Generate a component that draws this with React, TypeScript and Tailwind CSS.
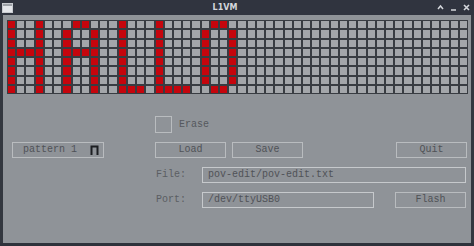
import React from 'react';

const ROWS = 8;
const COLS = 50;

// lit cells spelling HALLO, as "row,col"
function litCells(): Set<string> {
  const s = new Set<string>();
  const v = (c: number, r0: number, r1: number) => {
    for (let r = r0; r <= r1; r++) s.add(`${r},${c}`);
  };
  const h = (r: number, c0: number, c1: number) => {
    for (let c = c0; c <= c1; c++) s.add(`${r},${c}`);
  };
  // H
  v(0, 0, 7); v(3, 0, 7); h(3, 1, 2);
  // A
  v(6, 1, 7); v(9, 1, 7); h(0, 7, 8); h(3, 7, 8);
  // L
  v(12, 0, 7); h(7, 13, 14);
  // L
  v(16, 0, 7); h(7, 17, 19);
  // O
  v(21, 1, 6); v(24, 1, 6); h(0, 22, 23); h(7, 22, 23);
  return s;
}

const lit = litCells();

function LedGrid() {
  const cells = [];
  for (let r = 0; r < ROWS; r++) {
    for (let c = 0; c < COLS; c++) {
      const on = lit.has(`${r},${c}`);
      cells.push(
        <div key={`${r}-${c}`} className={on ? 'bg-[#c5050d]' : 'bg-[#a3a6aa]'} />
      );
    }
  }
  return (
    <div className="grid h-[74px] w-[461px] grid-cols-[repeat(50,1fr)] grid-rows-[repeat(8,1fr)] gap-[2px] bg-[#383c42] p-[1px]">
      {cells}
    </div>
  );
}

function Button({ label, className = '' }: { label: string; className?: string }) {
  return (
    <div
      className={`flex h-[16px] items-center justify-center border border-[#b9bcbf] text-[10px] leading-none text-[#4f5257] ${className}`}
    >
      {label}
    </div>
  );
}

function Entry({ value, className = '' }: { value: string; className?: string }) {
  return (
    <div
      className={`flex h-[16px] items-center border border-[#c6c9cc] pl-[5px] text-[10px] leading-none text-[#4f5257] ${className}`}
    >
      {value}
    </div>
  );
}

function TitleBar() {
  return (
    <div className="relative flex h-[15px] items-center bg-[#30343f] px-[2px]">
      <div className="flex h-[10px] w-[11px] flex-col border border-[#c8cbd0] bg-[#e4e6ea]">
        <div className="h-[2px] bg-[#9ea2a8]" />
      </div>
      <div className="flex-1 text-center text-[8px] font-bold leading-none text-[#d4d7dc] [font-family:'DejaVu_Sans',sans-serif]">
        L1VM
      </div>
      <div className="flex items-center gap-[6px] pr-[2px] text-[#d4d7dc]">
        <svg width="7" height="7" viewBox="0 0 7 7">
          <path d="M1 5 L3.5 2 L6 5" fill="none" stroke="currentColor" strokeWidth="1.5" />
        </svg>
        <svg width="7" height="7" viewBox="0 0 7 7">
          <path d="M1 6 H6" fill="none" stroke="currentColor" strokeWidth="1.5" />
        </svg>
        <svg width="7" height="7" viewBox="0 0 7 7">
          <path d="M1 1 L6 6 M6 1 L1 6" fill="none" stroke="currentColor" strokeWidth="1.6" />
        </svg>
      </div>
    </div>
  );
}

export default function App() {
  return (
    <div className="flex h-[246px] w-[474px] flex-col bg-[#30343f] [font-family:'Liberation_Mono',monospace]">
      <TitleBar />
      <div className="flex flex-1">
        <div className="w-[3px] bg-[#33373f]" />
        <div className="flex flex-1 flex-col bg-[#8f9398] pt-[5px] pl-[4px]">
          <LedGrid />

          {/* Erase checkbox */}
          <div className="mt-[22px] flex items-center pl-[148px]">
            <div className="h-[17px] w-[17px] border border-[#b9bcbf]" />
            <span className="ml-[7px] text-[10px] leading-none text-[#55585d]">Erase</span>
          </div>

          {/* pattern / load / save / quit */}
          <div className="mt-[9px] flex items-center">
            <div className="ml-[5px] flex h-[16px] w-[92px] items-center border border-[#b9bcbf] pl-[10px] pr-[4px] text-[10px] leading-none text-[#4f5257]">
              <span className="flex-1">pattern 1</span>
              <svg width="9" height="10" viewBox="0 0 9 10">
                <path d="M1.5 10 V1.5 H7.5 V10" fill="none" stroke="#1d1f22" strokeWidth="2" />
              </svg>
            </div>
            <Button label="Load" className="ml-[51px] w-[71px]" />
            <Button label="Save" className="ml-[6px] w-[71px]" />
            <Button label="Quit" className="ml-[93px] w-[71px]" />
          </div>

          {/* File */}
          <div className="mt-[9px] flex items-center">
            <span className="ml-[149px] w-[46px] text-[10px] leading-none text-[#5b5e63]">File:</span>
            <Entry value="pov-edit/pov-edit.txt" className="w-[264px]" />
          </div>

          {/* Port */}
          <div className="mt-[9px] flex items-center">
            <span className="ml-[149px] w-[46px] text-[10px] leading-none text-[#5b5e63]">Port:</span>
            <Entry value="/dev/ttyUSB0" className="w-[172px]" />
            <Button label="Flash" className="ml-[21px] w-[71px]" />
          </div>
        </div>
        <div className="w-[3px] bg-[#33373f]" />
      </div>
      <div className="h-[3px] bg-[#2e323b]" />
    </div>
  );
}
